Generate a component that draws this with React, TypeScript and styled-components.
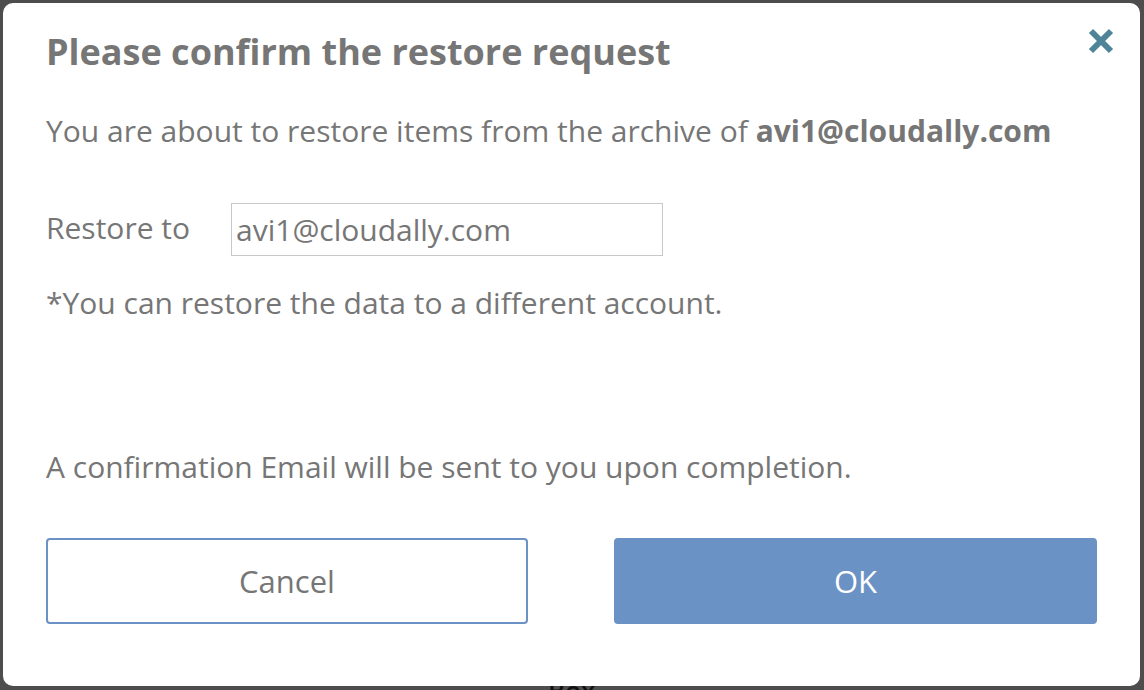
import React from "react";
import styled, { createGlobalStyle } from "styled-components";

const Global = createGlobalStyle`
  html, body { margin: 0; padding: 0; }
  body {
    background: #4d4d4d;
    font-family: "Open Sans", "Noto Sans", sans-serif;
    width: 1144px;
    height: 690px;
    overflow: hidden;
  }
`;

const Backdrop = styled.div`
  position: relative;
  width: 1144px;
  height: 690px;
  padding: 3px 4px 4px 3px;
  box-sizing: border-box;
`;

const Behind = styled.div`
  position: absolute;
  left: 548px;
  top: 672px;
  font-family: "Open Sans", sans-serif;
  font-size: 26px;
  font-weight: 600;
  color: #111;
  z-index: 0;
`;

const Modal = styled.div`
  position: relative;
  z-index: 1;
  background: #fff;
  border-radius: 10px;
  height: 100%;
  box-sizing: border-box;
  padding: 27px 43px 0 43px;
  display: flex;
  flex-direction: column;
  color: #767676;
`;

const Title = styled.h1`
  margin: 0;
  font-size: 36px;
  font-weight: 700;
  line-height: 44px;
  color: #767676;
`;

const Close = styled.button`
  position: absolute;
  top: 23px;
  right: 24px;
  width: 30px;
  height: 30px;
  border: 0;
  padding: 0;
  background: transparent;
  display: flex;
  align-items: center;
  justify-content: center;
`;

const Text = styled.p<{ $top: number }>`
  margin: ${(p) => p.$top}px 0 0 0;
  font-size: 30px;
  line-height: 36px;
  color: #767676;
  white-space: nowrap;
  b { font-weight: 700; }
`;

const Row = styled.div`
  display: flex;
  align-items: center;
  margin-top: 54px;
`;

const Label = styled.span`
  width: 185px;
  font-size: 30px;
  line-height: 36px;
  margin-top: -4px;
`;

const Input = styled.input`
  width: 432px;
  height: 53px;
  box-sizing: border-box;
  border: 1px solid #c8c8c8;
  padding: 0 4px;
  font-family: "Open Sans", sans-serif;
  font-size: 30px;
  color: #767676;
  outline: none;
`;

const Buttons = styled.div`
  display: grid;
  grid-template-columns: 482px 483px;
  justify-content: space-between;
  margin-top: 53px;
`;

const Btn = styled.button<{ $primary?: boolean }>`
  height: 86px;
  border-radius: 4px;
  font-family: "Open Sans", sans-serif;
  font-size: 31px;
  cursor: pointer;
  border: 2px solid #6b92c4;
  background: ${(p) => (p.$primary ? "#6b92c4" : "#fff")};
  color: ${(p) => (p.$primary ? "#fff" : "#767676")};
`;

export default function App() {
  return (
    <>
      <Global />
      <Backdrop>
        <Behind>Box</Behind>
        <Modal>
          <Title>Please confirm the restore request</Title>
          <Close aria-label="close">
            <svg width="28" height="28" viewBox="0 0 28 28">
              <path d="M4 4 L24 24 M24 4 L4 24" stroke="#4f8397" strokeWidth="6" strokeLinecap="butt" />
            </svg>
          </Close>
          <Text $top={39}>
            You are about to restore items from the archive of <b>avi1@cloudally.com</b>
          </Text>
          <Row>
            <Label>Restore to</Label>
            <Input defaultValue="avi1@cloudally.com" />
          </Row>
          <Text $top={29}>*You can restore the data to a different account.</Text>
          <Text $top={128}>A confirmation Email will be sent to you upon completion.</Text>
          <Buttons>
            <Btn>Cancel</Btn>
            <Btn $primary>OK</Btn>
          </Buttons>
        </Modal>
      </Backdrop>
    </>
  );
}
